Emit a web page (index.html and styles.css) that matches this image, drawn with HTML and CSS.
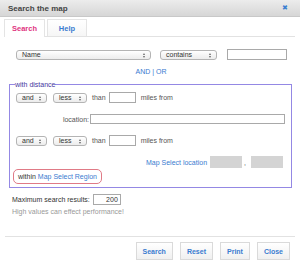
FILE: index.html
```html
<!DOCTYPE html>
<html lang="en">
<head>
    <meta charset="UTF-8">
    <title>Search the map</title>
    <link rel="stylesheet" href="styles.css">
</head>
<body>
    <div class="dialog">
        <div class="titlebar">
            <span class="title">Search the map</span>
            <span class="close">&#10006;</span>
        </div>

        <div class="tabs">
            <div class="tab active">Search</div>
            <div class="tab">Help</div>
        </div>

        <div class="content">
            <div class="row first">
                <div class="select sel-name">Name<span class="arrows"></span></div>
                <div class="select sel-contains">contains<span class="arrows"></span></div>
                <div class="input inp-value"></div>
            </div>

            <div class="andor">AND | OR</div>

            <fieldset class="distance">
                <legend>with distance</legend>
                <div class="row">
                    <div class="select sel-and">and<span class="arrows"></span></div>
                    <div class="select sel-less">less<span class="arrows"></span></div>
                    <span class="lbl">than</span>
                    <div class="input inp-miles"></div>
                    <span class="lbl">miles from</span>
                </div>
                <div class="row loc">
                    <span class="lbl loc-label">location:</span>
                    <div class="input inp-loc"></div>
                </div>
                <div class="row">
                    <div class="select sel-and">and<span class="arrows"></span></div>
                    <div class="select sel-less">less<span class="arrows"></span></div>
                    <span class="lbl">than</span>
                    <div class="input inp-miles"></div>
                    <span class="lbl">miles from</span>
                </div>
                <div class="row mapsel">
                    <a class="link">Map Select location</a>
                    <div class="coord"></div>
                    <span class="comma">,</span>
                    <div class="coord"></div>
                </div>
                <div class="region">within <a class="link">Map Select Region</a></div>
            </fieldset>

            <div class="maxrow">
                <span>Maximum search results:</span>
                <div class="input inp-max">200</div>
            </div>
            <div class="hint">High values can effect performance!</div>
        </div>

        <div class="buttons">
            <div class="btn">Search</div>
            <div class="btn">Reset</div>
            <div class="btn">Print</div>
            <div class="btn">Close</div>
        </div>
    </div>
</body>
</html>
```

FILE: styles.css
```css
/* dialog "Search the map" */
body {
    margin: 0;
    padding: 0;
    background-color: #fff;
    font-family: "Liberation Sans", Arial, sans-serif;
    font-size: 7px;
    color: #333;
}

.dialog {
    width: 300px;
    height: 265px;
    position: relative;
    overflow: hidden;
}

.titlebar {
    height: 16px;
    display: flex;
    align-items: center;
    justify-content: space-between;
    padding: 0 12px 0 8px;
    background: linear-gradient(#ececec, #d6d6d6);
    border-bottom: 1px solid #c8c8c8;
}

.title {
    font-weight: bold;
    font-size: 8px;
    color: #444;
}

.close {
    color: #3b7fd1;
    font-size: 7px;
}

.tabs {
    display: flex;
    margin: 2px 5px 0 4px;
    height: 17px;
    border-bottom: 1px solid #e2e2e2;
}

.tab {
    width: 26px;
    padding: 0 6px;
    display: flex;
    align-items: center;
    justify-content: center;
    font-weight: bold;
    font-size: 7.5px;
    color: #3a7bd0;
    border: 1px solid #e4e4e4;
    border-bottom: none;
    background: linear-gradient(#fff, #f6f6f6);
    margin-right: 2px;
}

.tab.active {
    width: 27px;
    color: #e0347f;
    background: #fff;
    margin-bottom: -1px;
}

.content {
    padding: 12px 0 0 0;
}

.row {
    display: flex;
    align-items: center;
}

.row.first {
    padding-left: 16px;
}

.select {
    height: 10px;
    box-sizing: border-box;
    border: 1px solid #b4b4b4;
    border-radius: 3px;
    background: linear-gradient(#fff, #ececec);
    display: flex;
    align-items: center;
    padding-left: 5px;
    color: #333;
    position: relative;
}

/* tiny up/down arrows drawn with css */
.arrows {
    position: absolute;
    right: 5px;
    top: 2px;
    width: 0;
    height: 0;
    border-left: 1.5px solid transparent;
    border-right: 1.5px solid transparent;
    border-bottom: 2px solid #666;
}

.arrows::after {
    content: "";
    position: absolute;
    left: -1.5px;
    top: 3px;
    border-left: 1.5px solid transparent;
    border-right: 1.5px solid transparent;
    border-top: 2px solid #666;
}

.input {
    height: 10px;
    box-sizing: border-box;
    border: 1px solid #a9a9a9;
    background: #fff;
}

.sel-name {
    width: 135px;
}

.sel-contains {
    width: 57px;
    margin-left: 9px;
}

.inp-value {
    width: 60px;
    height: 11px;
    margin-left: 10px;
}

.andor {
    text-align: center;
    color: #3a7bd0;
    margin: 8px 0 0 2px;
    height: 10px;
}

fieldset.distance {
    margin: 3px 12px 0 9px;
    padding: 4px 6px 3px 6px;
    border: 1px solid #9488e4;
    box-sizing: border-box;
}

fieldset.distance legend {
    padding: 0;
    margin-left: -1px;
    color: #4536a0;
    font-size: 7px;
}

.sel-and {
    width: 31px;
}

.sel-less {
    width: 34px;
    margin-left: 6px;
}

.lbl {
    color: #555;
    margin-left: 5px;
}

.inp-miles {
    width: 27px;
    margin-left: 3px;
    height: 11px;
}

.row.loc {
    margin: 11px 0 11px 0;
}

.loc-label {
    width: 73px;
    text-align: right;
    margin-left: 0;
}

.inp-loc {
    width: 195px;
    margin-left: 1px;
}

.row.mapsel {
    justify-content: flex-end;
    margin-top: 10px;
    padding-right: 2px;
}

.link {
    color: #3a7bd0;
}

.coord {
    width: 32px;
    height: 12px;
    background: #d4d4d4;
    margin-left: 3px;
}

.comma {
    margin: 0 2px 0 2px;
    color: #555;
}

.region {
    display: inline-block;
    margin: 1px 0 0 -3px;
    padding: 3px 4px;
    border: 1px solid #e07a86;
    border-radius: 5px;
}

.maxrow {
    display: flex;
    align-items: center;
    margin: 6px 0 0 12px;
}

.inp-max {
    width: 28px;
    height: 11px;
    text-align: right;
    margin-left: 3px;
    padding-right: 2px;
    line-height: 9px;
}

.hint {
    margin: 3px 0 0 12px;
    color: #999;
}

.buttons {
    position: absolute;
    left: 5px;
    right: 5px;
    top: 236px;
    border-top: 1px solid #e2e2e2;
    display: flex;
    justify-content: flex-end;
    padding: 5px 5px 0 0;
}

.btn {
    padding: 0 6px;
    height: 18px;
    box-sizing: border-box;
    border: 1px solid #dadada;
    background: linear-gradient(#fff, #f0f0f0);
    color: #3a7bd0;
    font-weight: bold;
    display: flex;
    align-items: center;
    justify-content: center;
    margin-left: 7px;
}
```
